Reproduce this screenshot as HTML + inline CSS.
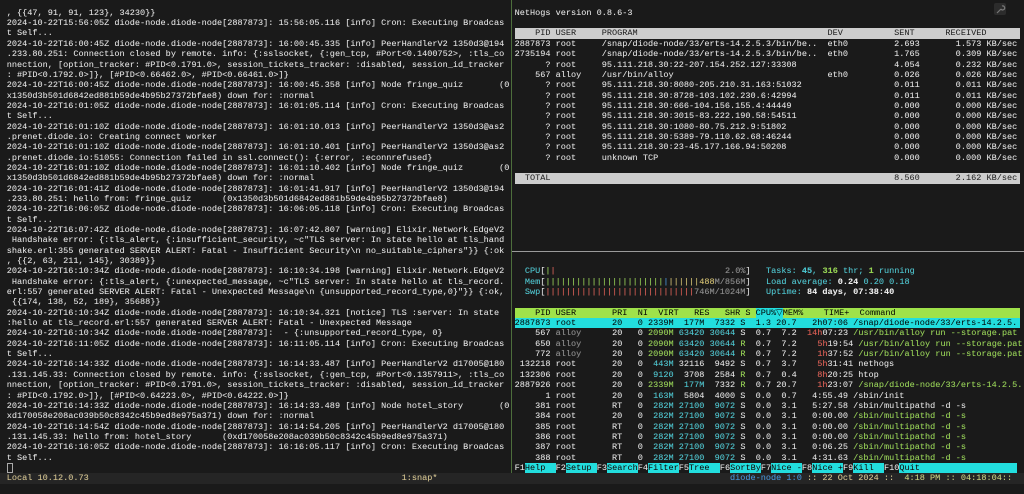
<!DOCTYPE html>
<html><head><meta charset="utf-8">
<style>
html,body{margin:0;padding:0;background:#1a1a1a;width:1024px;height:494px;overflow:hidden}
.p{position:absolute;top:7.8px;font-family:"Liberation Mono",monospace;font-size:8.55px;color:#e4e4e4;text-shadow:0 0 0.4px rgba(255,255,255,0.35)}
.l{height:10.35px;line-height:10.35px;white-space:pre}
#L{left:6.7px;width:503px}
#R{left:514.6px;width:505px}
.hb{background:#cdcdcd;color:#1a1a1a;text-shadow:none}
.c{color:#45c9d4}.g{color:#95d64e}.r{color:#e2574c}.d{color:#8c8c8c}.b{color:#3b8fd9}.y{color:#d8c36c}.w{color:#f0f0f0;font-weight:bold}
.sel{background:#22dede;color:#000;text-shadow:none}
.gh{background:#9fe24a;color:#000;text-shadow:none}
.ch{background:#22dede;color:#000}
.fk{color:#e8e8e8}.fl{background:#22dede;color:#000}
.tan{color:#d6c48c}
</style></head><body>
<div style="position:absolute;left:0;top:473px;width:1024px;height:11px;background:#252525"></div>
<div style="position:absolute;left:511px;top:0;width:1px;height:473px;background:#4d6e3c"></div>
<div style="position:absolute;left:512px;top:250.5px;width:512px;height:1px;background:#9a9a9a"></div>
<div style="position:absolute;left:994px;top:3px;width:12px;height:12px;border-radius:2px;background:#2c2c2c"><svg width="12" height="12" viewBox="0 0 12 12"><path d="M3 9 L7 5 M7 5 a2 2 0 1 0 1-3" stroke="#777" stroke-width="1.2" fill="none"/></svg></div>

<div class="p" id="L">
<div class="l">, {{47, 91, 91, 123}, 34230}}</div>
<div class="l">2024-10-22T15:56:05Z diode-node.diode-node[2887873]: 15:56:05.116 [info] Cron: Executing Broadcas</div>
<div class="l">t Self...</div>
<div class="l">2024-10-22T16:00:45Z diode-node.diode-node[2887873]: 16:00:45.335 [info] PeerHandlerV2 1350d3@194</div>
<div class="l">.233.80.251: Connection closed by remote. info: {:sslsocket, {:gen_tcp, #Port&lt;0.1400752&gt;, :tls_co</div>
<div class="l">nnection, [option_tracker: #PID&lt;0.1791.0&gt;, session_tickets_tracker: :disabled, session_id_tracker</div>
<div class="l">: #PID&lt;0.1792.0&gt;]}, [#PID&lt;0.66462.0&gt;, #PID&lt;0.66461.0&gt;]}</div>
<div class="l">2024-10-22T16:00:45Z diode-node.diode-node[2887873]: 16:00:45.358 [info] Node fringe_quiz       (0</div>
<div class="l">x1350d3b501d6842ed881b59de4b95b27372bfae8) down for: :normal</div>
<div class="l">2024-10-22T16:01:05Z diode-node.diode-node[2887873]: 16:01:05.114 [info] Cron: Executing Broadcas</div>
<div class="l">t Self...</div>
<div class="l">2024-10-22T16:01:10Z diode-node.diode-node[2887873]: 16:01:10.013 [info] PeerHandlerV2 1350d3@as2</div>
<div class="l">.prenet.diode.io: Creating connect worker</div>
<div class="l">2024-10-22T16:01:10Z diode-node.diode-node[2887873]: 16:01:10.401 [info] PeerHandlerV2 1350d3@as2</div>
<div class="l">.prenet.diode.io:51055: Connection failed in ssl.connect(): {:error, :econnrefused}</div>
<div class="l">2024-10-22T16:01:10Z diode-node.diode-node[2887873]: 16:01:10.402 [info] Node fringe_quiz       (0</div>
<div class="l">x1350d3b501d6842ed881b59de4b95b27372bfae8) down for: :normal</div>
<div class="l">2024-10-22T16:01:41Z diode-node.diode-node[2887873]: 16:01:41.917 [info] PeerHandlerV2 1350d3@194</div>
<div class="l">.233.80.251: hello from: fringe_quiz      (0x1350d3b501d6842ed881b59de4b95b27372bfae8)</div>
<div class="l">2024-10-22T16:06:05Z diode-node.diode-node[2887873]: 16:06:05.118 [info] Cron: Executing Broadcas</div>
<div class="l">t Self...</div>
<div class="l">2024-10-22T16:07:42Z diode-node.diode-node[2887873]: 16:07:42.807 [warning] Elixir.Network.EdgeV2</div>
<div class="l"> Handshake error: {:tls_alert, {:insufficient_security, ~c"TLS server: In state hello at tls_hand</div>
<div class="l">shake.erl:355 generated SERVER ALERT: Fatal - Insufficient Security\n no_suitable_ciphers"}} {:ok</div>
<div class="l">, {{2, 63, 211, 145}, 30389}}</div>
<div class="l">2024-10-22T16:10:34Z diode-node.diode-node[2887873]: 16:10:34.198 [warning] Elixir.Network.EdgeV2</div>
<div class="l"> Handshake error: {:tls_alert, {:unexpected_message, ~c"TLS server: In state hello at tls_record.</div>
<div class="l">erl:557 generated SERVER ALERT: Fatal - Unexpected Message\n {unsupported_record_type,0}"}} {:ok,</div>
<div class="l"> {{174, 138, 52, 189}, 35688}}</div>
<div class="l">2024-10-22T16:10:34Z diode-node.diode-node[2887873]: 16:10:34.321 [notice] TLS :server: In state</div>
<div class="l">:hello at tls_record.erl:557 generated SERVER ALERT: Fatal - Unexpected Message</div>
<div class="l">2024-10-22T16:10:34Z diode-node.diode-node[2887873]:  - {:unsupported_record_type, 0}</div>
<div class="l">2024-10-22T16:11:05Z diode-node.diode-node[2887873]: 16:11:05.114 [info] Cron: Executing Broadcas</div>
<div class="l">t Self...</div>
<div class="l">2024-10-22T16:14:33Z diode-node.diode-node[2887873]: 16:14:33.487 [info] PeerHandlerV2 d17005@180</div>
<div class="l">.131.145.33: Connection closed by remote. info: {:sslsocket, {:gen_tcp, #Port&lt;0.1357911&gt;, :tls_co</div>
<div class="l">nnection, [option_tracker: #PID&lt;0.1791.0&gt;, session_tickets_tracker: :disabled, session_id_tracker</div>
<div class="l">: #PID&lt;0.1792.0&gt;]}, [#PID&lt;0.64223.0&gt;, #PID&lt;0.64222.0&gt;]}</div>
<div class="l">2024-10-22T16:14:33Z diode-node.diode-node[2887873]: 16:14:33.489 [info] Node hotel_story       (0</div>
<div class="l">xd170058e208ac039b50c8342c45b9ed8e975a371) down for: :normal</div>
<div class="l">2024-10-22T16:14:54Z diode-node.diode-node[2887873]: 16:14:54.205 [info] PeerHandlerV2 d17005@180</div>
<div class="l">.131.145.33: hello from: hotel_story      (0xd170058e208ac039b50c8342c45b9ed8e975a371)</div>
<div class="l">2024-10-22T16:16:05Z diode-node.diode-node[2887873]: 16:16:05.117 [info] Cron: Executing Broadcas</div>
<div class="l">t Self...</div>
<div class="l"><span style="display:inline-block;width:4px;height:8px;border:1px solid #aaa;vertical-align:-1px"></span></div>
<div class="l tan">Local 10.12.0.73                                                             1:snap*</div>
</div>

<div class="p" id="R">
<div class="l">NetHogs version 0.8.6-3</div>
<div class="l"> </div>
<div class="l hb">    PID USER     PROGRAM                                     DEV          SENT      RECEIVED      </div>
<div class="l">2887873 root     /snap/diode-node/33/erts-14.2.5.3/bin/be..  eth0         2.693       1.573 KB/sec</div>
<div class="l">2735194 root     /snap/diode-node/33/erts-14.2.5.3/bin/be..  eth0         1.765       0.309 KB/sec</div>
<div class="l">      ? root     95.111.218.30:22-207.154.252.127:33308                   4.054       0.232 KB/sec</div>
<div class="l">    567 alloy    /usr/bin/alloy                              eth0         0.026       0.026 KB/sec</div>
<div class="l">      ? root     95.111.218.30:8080-205.210.31.163:51032                  0.011       0.011 KB/sec</div>
<div class="l">      ? root     95.111.218.30:8728-103.102.230.6:42994                   0.011       0.011 KB/sec</div>
<div class="l">      ? root     95.111.218.30:666-104.156.155.4:44449                    0.000       0.000 KB/sec</div>
<div class="l">      ? root     95.111.218.30:3015-83.222.190.58:54511                   0.000       0.000 KB/sec</div>
<div class="l">      ? root     95.111.218.30:1080-80.75.212.9:51802                     0.000       0.000 KB/sec</div>
<div class="l">      ? root     95.111.218.30:5389-79.110.62.68:46244                    0.000       0.000 KB/sec</div>
<div class="l">      ? root     95.111.218.30:23-45.177.166.94:50208                     0.000       0.000 KB/sec</div>
<div class="l">      ? root     unknown TCP                                              0.000       0.000 KB/sec</div>
<div class="l"> </div>
<div class="l hb">  TOTAL                                                                   8.560       2.162 KB/sec</div>
<div class="l"> </div><div class="l"> </div><div class="l"> </div><div class="l"> </div><div class="l"> </div><div class="l"> </div>
<div class="l"> </div>
<div class="l"> </div>
<div class="l">  <span class="c">CPU</span>[<span class="g">|</span><span class="r">|</span>                                 <span class="d">2.0%</span>]   <span class="c">Tasks: </span><span class="c" style="font-weight:bold">45</span><span class="c">, </span><span class="g" style="font-weight:bold">316</span><span class="c"> thr; </span><span class="g" style="font-weight:bold">1</span><span class="c"> running</span></div>
<div class="l">  <span class="c">Mem</span>[<span class="g">|||||||||||||||||||||||</span><span class="b">|</span><span class="y">||||||488</span><span class="d">M/856M</span>]   <span class="c">Load average: </span><span class="w">0.24 </span><span class="c">0.20 0.18</span></div>
<div class="l">  <span class="c">Swp</span>[<span class="r">|||||||||||||||||||||||||||||</span><span class="d">746M/1024M</span>]   <span class="c">Uptime: </span><span class="w">84 days, 07:38:40</span></div>
<div class="l"> </div>
<div class="l gh">    PID USER       PRI  NI  VIRT   RES   SHR S <span class="ch">CPU%▽</span>MEM%    TIME+  Command                          </div>
<div class="l sel">2887873 root       20   0 2339M  177M  7332 S  1.3 20.7   2h07:06 /snap/diode-node/33/erts-14.2.5.</div>
<div class="l">    567 <span class="d">alloy    </span>  20   0 <span class="g">2090M</span> <span class="c">63420</span> <span class="c">30644</span> S  0.7  7.2 <span class="r"> 14h</span>07:23 <span class="g">/usr/bin/alloy run --storage.pat</span></div>
<div class="l">    650 <span class="d">alloy    </span>  20   0 <span class="g">2090M</span> <span class="c">63420</span> <span class="c">30644</span> <span class="g">R</span>  0.7  7.2 <span class="r">   5h</span>19:54 <span class="g">/usr/bin/alloy run --storage.pat</span></div>
<div class="l">    772 <span class="d">alloy    </span>  20   0 <span class="g">2090M</span> <span class="c">63420</span> <span class="c">30644</span> <span class="g">R</span>  0.7  7.2 <span class="r">   1h</span>37:52 <span class="g">/usr/bin/alloy run --storage.pat</span></div>
<div class="l"> 132218 root       20   0  <span class="c">443M</span> 32116  9492 S  0.7  3.7 <span class="r">   5h</span>31:41 nethogs</div>
<div class="l"> 132306 root       20   0  <span class="c">9120</span>  3708  2584 <span class="g">R</span>  0.7  0.4 <span class="r">   8h</span>20:25 htop</div>
<div class="l">2887926 root       20   0 <span class="g">2339M</span>  <span class="c">177M</span>  7332 <span class="g">R</span>  0.7 20.7 <span class="r">   1h</span>23:07 <span class="g">/snap/diode-node/33/erts-14.2.5.</span></div>
<div class="l">      1 root       20   0  <span class="c">163M</span>  5804  4000 S  0.0  0.7   4:55.49 /sbin/init</div>
<div class="l">    381 root       RT   0  <span class="c">282M</span> <span class="c">27100</span>  <span class="c">9072</span> S  0.0  3.1   5:27.58 /sbin/multipathd -d -s</div>
<div class="l">    384 root       20   0  <span class="c">282M</span> <span class="c">27100</span>  <span class="c">9072</span> S  0.0  3.1   0:00.00 <span class="g">/sbin/multipathd -d -s</span></div>
<div class="l">    385 root       RT   0  <span class="c">282M</span> <span class="c">27100</span>  <span class="c">9072</span> S  0.0  3.1   0:00.00 <span class="g">/sbin/multipathd -d -s</span></div>
<div class="l">    386 root       RT   0  <span class="c">282M</span> <span class="c">27100</span>  <span class="c">9072</span> S  0.0  3.1   0:00.00 <span class="g">/sbin/multipathd -d -s</span></div>
<div class="l">    387 root       RT   0  <span class="c">282M</span> <span class="c">27100</span>  <span class="c">9072</span> S  0.0  3.1   0:06.25 <span class="g">/sbin/multipathd -d -s</span></div>
<div class="l">    388 root       RT   0  <span class="c">282M</span> <span class="c">27100</span>  <span class="c">9072</span> S  0.0  3.1   4:31.63 <span class="g">/sbin/multipathd -d -s</span></div>
<div class="l"><span class="fk">F1</span><span class="fl">Help  </span><span class="fk">F2</span><span class="fl">Setup </span><span class="fk">F3</span><span class="fl">Search</span><span class="fk">F4</span><span class="fl">Filter</span><span class="fk">F5</span><span class="fl">Tree  </span><span class="fk">F6</span><span class="fl">SortBy</span><span class="fk">F7</span><span class="fl">Nice -</span><span class="fk">F8</span><span class="fl">Nice +</span><span class="fk">F9</span><span class="fl">Kill  </span><span class="fk">F10</span><span class="fl">Quit                   </span></div>
<div class="l">                                          <span class="b">diode-node 1:0</span><span class="tan"> :: 22 Oct 2024 :: </span><span style="color:#c9d27a"> 4:18 PM :: 04:18:04::</span></div>
</div>
</body></html>
